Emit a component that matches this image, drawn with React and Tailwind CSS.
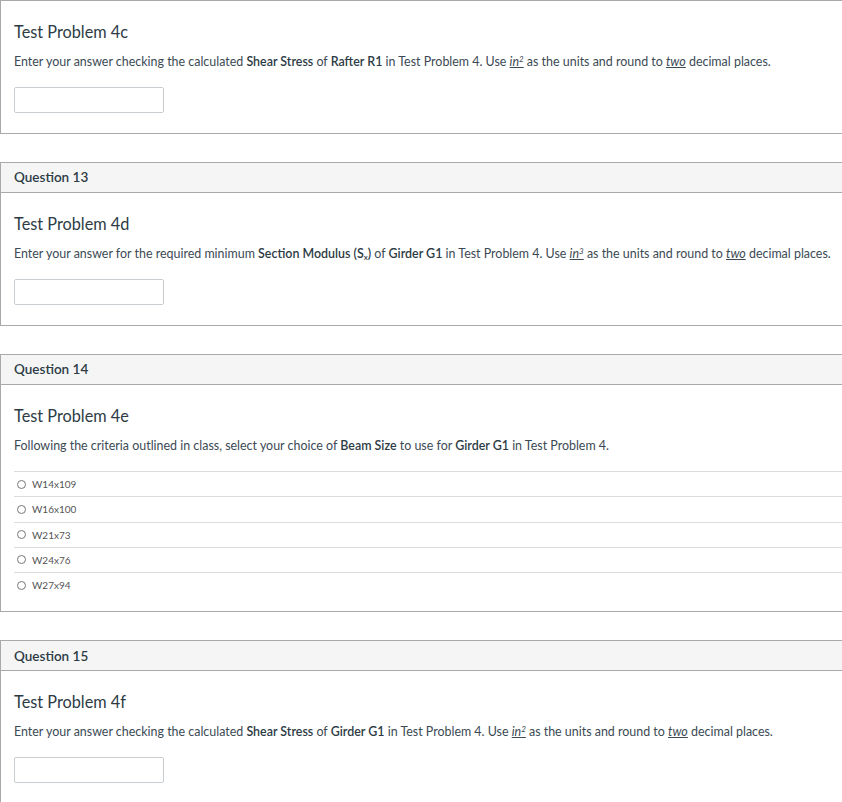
import React from "react";

const font = { fontFamily: "Lato, 'Noto Sans', sans-serif" };

function Units({ power }) {
  return (
    <span className="italic underline">
      in<sup className="text-[8px]">{power}</sup>
    </span>
  );
}

function AnswerInput() {
  return (
    <input
      type="text"
      className="mt-[16px] block h-[26px] w-[150px] rounded-[2px] border border-[#c7cdd1] bg-white px-2 text-sm outline-none"
    />
  );
}

function Body({ title, children, pb = "pb-[20px]" }) {
  return (
    <div className={`px-[13px] pt-[21px] ${pb}`}>
      <h2 className="text-[16.3px] leading-[20px] text-[#2d3b45]">{title}</h2>
      <div className="mt-[11px] text-[12.45px] leading-[18px] text-[#3b4a54]">{children}</div>
    </div>
  );
}

function Header({ label }) {
  return (
    <div className="flex h-[30px] items-center border-b border-[#a9a9a9] bg-[#f5f5f5] px-[13px] text-[13.5px] font-semibold text-[#2d3b45]">
      {label}
    </div>
  );
}

function Panel({ label, children }) {
  return (
    <div className="w-[880px] border border-[#a9a9a9] bg-white">
      {label && <Header label={label} />}
      {children}
    </div>
  );
}

const B = ({ children }) => <b className="font-semibold text-[#2d3b45]">{children}</b>;

const sizes = ["W14x109", "W16x100", "W21x73", "W24x76", "W27x94"];

export default function App() {
  return (
    <div className="w-[842px] h-[802px] overflow-hidden bg-white" style={font}>
      <div className="flex flex-col gap-[28px]">
        <Panel>
          <Body title="Test Problem 4c">
            <p>
              Enter your answer checking the calculated <B>Shear Stress</B> of <B>Rafter R1</B> in Test Problem 4. Use{" "}
              <Units power="2" /> as the units and round to <span className="italic underline">two</span> decimal places.
            </p>
            <AnswerInput />
          </Body>
        </Panel>

        <Panel label="Question 13">
          <Body title="Test Problem 4d">
            <p>
              Enter your answer for the required minimum{" "}
              <B>
                Section Modulus (S<sub className="text-[8px]">x</sub>)
              </B>{" "}
              of <B>Girder G1</B> in Test Problem 4. Use <Units power="3" /> as the units and round to{" "}
              <span className="italic underline">two</span> decimal places.
            </p>
            <AnswerInput />
          </Body>
        </Panel>

        <Panel label="Question 14">
          <Body title="Test Problem 4e" pb="pb-[14px]">
            <p>
              Following the criteria outlined in class, select your choice of <B>Beam Size</B> to use for{" "}
              <B>Girder G1</B> in Test Problem 4.
            </p>
            <div className="mt-[16px]">
              {sizes.map((s) => (
                <label
                  key={s}
                  className="flex h-[25.25px] items-center gap-[6px] border-t border-[#dcdcdc] pl-[3px] text-[10px] text-[#555]"
                >
                  <span className="h-[9px] w-[9px] rounded-full border border-[#777] bg-white" />
                  {s}
                </label>
              ))}
            </div>
          </Body>
        </Panel>

        <Panel label="Question 15">
          <Body title="Test Problem 4f" pb="pb-[30px]">
            <p>
              Enter your answer checking the calculated <B>Shear Stress</B> of <B>Girder G1</B> in Test Problem 4. Use{" "}
              <Units power="2" /> as the units and round to <span className="italic underline">two</span> decimal places.
            </p>
            <AnswerInput />
          </Body>
        </Panel>
      </div>
    </div>
  );
}
